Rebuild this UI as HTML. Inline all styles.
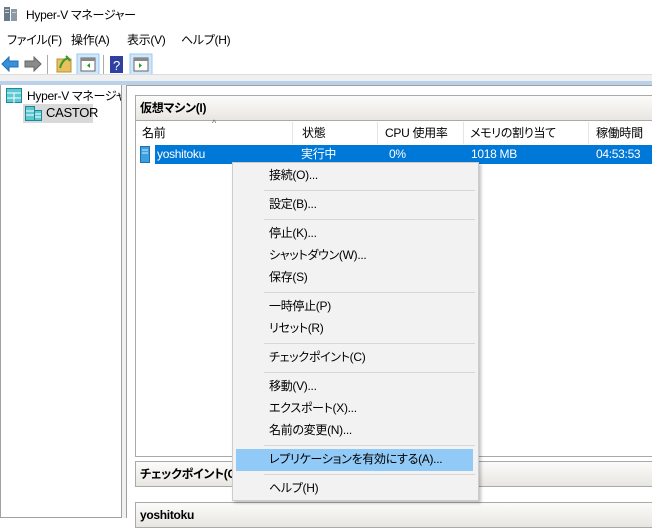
<!DOCTYPE html>
<html><head><meta charset="utf-8"><style>
*{margin:0;padding:0;box-sizing:border-box}
body{width:652px;height:518px;overflow:hidden;background:#fff;font-family:"Liberation Sans","Noto Sans CJK JP",sans-serif;font-size:12px;line-height:14px;color:#000;position:relative;font-feature-settings:"palt";letter-spacing:-0.3px}
.a{position:absolute;white-space:nowrap}
.mi{position:absolute;left:36px;font-size:12px;white-space:nowrap}
.sep{position:absolute;left:31px;right:3px;height:1px;background:#d7d7d7}
.hdr{background:linear-gradient(#fbfbfa,#e8e6e1);border:1px solid #a9a9a9}
</style></head><body>
<svg class="a" style="left:4px;top:6px" width="14" height="16"><rect x="0" y="1" width="6" height="14" fill="#6a7b88"/><rect x="7" y="3" width="6" height="12" fill="#8a9aa6"/><rect x="1" y="3" width="4" height="1" fill="#ccc"/><rect x="1" y="6" width="4" height="1" fill="#ccc"/><rect x="8" y="6" width="4" height="1" fill="#ccc"/></svg>
<div class="a" style="left:26px;top:8px">Hyper-V マネージャー</div>
<div class="a" style="left:7px;top:33px">ファイル(F)</div>
<div class="a" style="left:71px;top:33px">操作(A)</div>
<div class="a" style="left:127px;top:33px">表示(V)</div>
<div class="a" style="left:181px;top:33px">ヘルプ(H)</div>
<svg class="a" style="left:0;top:52px" width="170" height="24">
<path d="M2 12 L9 5 V9 H18 V15 H9 V19 Z" fill="#3a8fdc" stroke="#1f6cb8"/>
<path d="M41 12 L34 5 V9 H25 V15 H34 V19 Z" fill="#8a8a8a" stroke="#666"/>
<rect x="47" y="3" width="1" height="19" fill="#aaa"/>
<rect x="57" y="7" width="14" height="13" fill="#e8c060" stroke="#b89030"/>
<path d="M60 16 Q62 8 68 6 L66 4 M68 6 L70 9" stroke="#3a9a2a" stroke-width="2" fill="none"/>
<rect x="77" y="2" width="22" height="21" fill="#cfe6fb" stroke="#98c8f0"/>
<rect x="81" y="6" width="14" height="13" fill="#fff" stroke="#666"/><rect x="81" y="6" width="14" height="3" fill="#888"/><path d="M90 11 L87 13.5 L90 16Z" fill="#2a9a2a"/>
<rect x="103" y="3" width="1" height="19" fill="#aaa"/>
<rect x="110" y="4" width="13" height="17" fill="#3040a0"/><text x="113" y="18" fill="#fff" font-size="13" font-family="Liberation Sans">?</text>
<rect x="130" y="2" width="22" height="21" fill="#cfe6fb" stroke="#98c8f0"/>
<rect x="134" y="6" width="14" height="13" fill="#fff" stroke="#666"/><rect x="134" y="6" width="14" height="3" fill="#888"/><path d="M139 11 L142 13.5 L139 16Z" fill="#2a9a2a"/>
</svg>
<div class="a" style="left:0;top:74px;width:652px;height:1px;background:#dcdcdc"></div>
<div class="a" style="left:0;top:75px;width:652px;height:6px;background:#f0f0f0"></div>
<div class="a" style="left:0;top:81px;width:652px;height:4px;background:#b9d1ea"></div>
<div class="a" style="left:0;top:85px;width:122px;height:433px;border:1px solid #a0a0a0;border-top:none;background:#fff"></div>
<div class="a" style="left:122px;top:85px;width:4px;height:433px;background:#f0f0f0"></div>
<svg class="a" style="left:6px;top:88px" width="16" height="15"><rect x="0.5" y="0.5" width="15" height="14" fill="#5cc8d0" stroke="#1a8a98"/><path d="M1 5H15M1 10H15M8 5V15" stroke="#fff"/></svg>
<div class="a" style="left:27px;top:89px;width:94px;overflow:hidden">Hyper-V マネージャ·</div>
<div class="a" style="left:23px;top:104px;width:70px;height:19px;background:#d9d9d9"></div>
<svg class="a" style="left:25px;top:106px" width="17" height="15"><rect x="0.5" y="0.5" width="9" height="14" fill="#5cc8d0" stroke="#1a8a98"/><rect x="9.5" y="4.5" width="7" height="10" fill="#5cc8d0" stroke="#1a8a98"/><path d="M1 5H9M1 9H9M10 8H16M10 11H16" stroke="#fff"/></svg>
<div class="a" style="left:46px;top:106px;font-size:13px">CASTOR</div>
<div class="a" style="left:126px;top:85px;width:526px;height:433px;border-left:1px solid #a0a0a0;border-top:1px solid #a0a0a0;background:#fff"></div>
<div class="a" style="left:135px;top:95px;width:520px;height:362px;border:1px solid #a9a9a9;background:#fff"></div>
<div class="a hdr" style="left:135px;top:95px;width:520px;height:26px"></div>
<div class="a" style="left:140px;top:101px;font-weight:bold">仮想マシン(I)</div>
<div class="a" style="left:212px;top:116px;font-size:9px;color:#666">^</div>
<div class="a" style="left:142px;top:126px">名前</div>
<div class="a" style="left:292px;top:122px;width:1px;height:22px;background:#e5e5e5"></div>
<div class="a" style="left:302px;top:126px">状態</div>
<div class="a" style="left:377px;top:122px;width:1px;height:22px;background:#e5e5e5"></div>
<div class="a" style="left:385px;top:126px">CPU 使用率</div>
<div class="a" style="left:463px;top:122px;width:1px;height:22px;background:#e5e5e5"></div>
<div class="a" style="left:470px;top:126px">メモリの割り当て</div>
<div class="a" style="left:588px;top:122px;width:1px;height:22px;background:#e5e5e5"></div>
<div class="a" style="left:596px;top:126px">稼働時間</div>
<svg class="a" style="left:140px;top:146px" width="10" height="17"><rect x="0.5" y="0.5" width="9" height="16" fill="#3aa0e0" stroke="#1a70b0"/><path d="M2 4H8M2 7H8" stroke="#cfe8fa"/></svg>
<div class="a" style="left:155px;top:145px;width:497px;height:19px;background:#0078d7"></div>
<div class="a" style="left:157px;top:147px;color:#fff">yoshitoku</div>
<div class="a" style="left:301px;top:147px;color:#fff">実行中</div>
<div class="a" style="left:389px;top:147px;color:#fff">0%</div>
<div class="a" style="left:471px;top:147px;color:#fff">1018 MB</div>
<div class="a" style="left:596px;top:147px;color:#fff">04:53:53</div>
<div class="a hdr" style="left:135px;top:461px;width:520px;height:26px"></div>
<div class="a" style="left:140px;top:467px;font-weight:bold">チェックポイント(C)</div>
<div class="a hdr" style="left:135px;top:502px;width:520px;height:26px"></div>
<div class="a" style="left:140px;top:508px;font-weight:bold">yoshitoku</div>
<div class="a" style="left:232px;top:162px;width:247px;height:339px;background:#f2f2f2;border:1px solid #cccccc;box-shadow:2px 2px 3px rgba(0,0,0,.25)">
<div class="mi" style="top:5px">接続(O)...</div>
<div class="sep" style="top:27px"></div>
<div class="mi" style="top:34px">設定(B)...</div>
<div class="sep" style="top:56px"></div>
<div class="mi" style="top:63px">停止(K)...</div>
<div class="mi" style="top:85px">シャットダウン(W)...</div>
<div class="mi" style="top:107px">保存(S)</div>
<div class="sep" style="top:129px"></div>
<div class="mi" style="top:136px">一時停止(P)</div>
<div class="mi" style="top:158px">リセット(R)</div>
<div class="sep" style="top:180px"></div>
<div class="mi" style="top:187px">チェックポイント(C)</div>
<div class="sep" style="top:209px"></div>
<div class="mi" style="top:216px">移動(V)...</div>
<div class="mi" style="top:238px">エクスポート(X)...</div>
<div class="mi" style="top:260px">名前の変更(N)...</div>
<div class="sep" style="top:282px"></div>
<div class="a" style="left:3px;top:286px;width:237px;height:22px;background:#91c9f7"></div>
<div class="mi" style="top:289px">レプリケーションを有効にする(A)...</div>
<div class="sep" style="top:311px"></div>
<div class="mi" style="top:318px">ヘルプ(H)</div>
</div>
</body></html>
